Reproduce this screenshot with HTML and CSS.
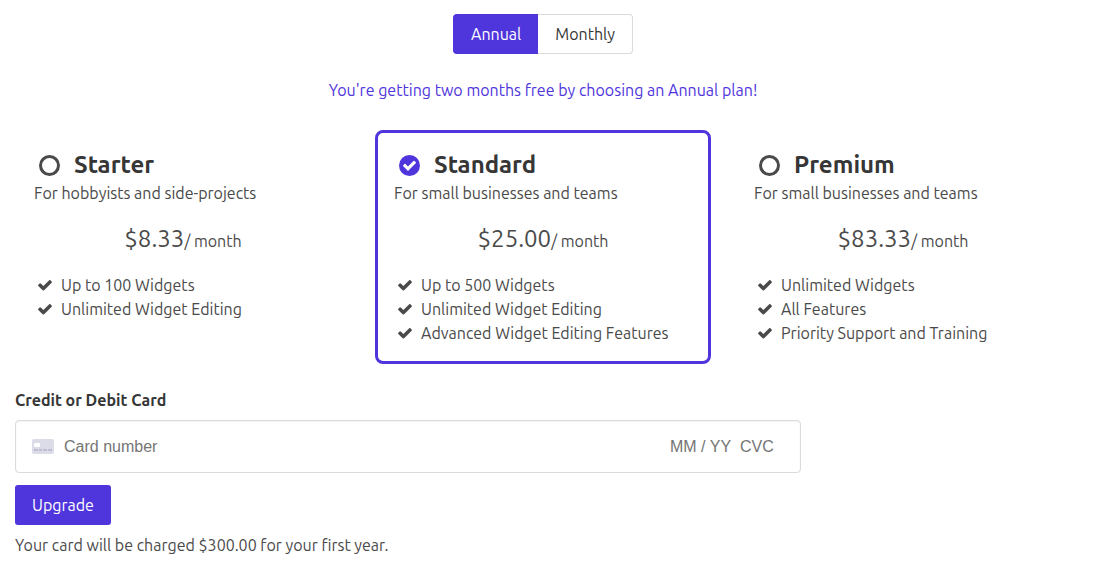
FILE: index.html
```html
<!DOCTYPE html>
<html lang="en">
<head>
    <meta charset="UTF-8">
    <meta name="viewport" content="width=device-width, initial-scale=1.0">
    <title>Upgrade</title>
    <link rel="stylesheet" href="styles.css">
</head>
<body>
    <svg width="0" height="0" class="sprite" aria-hidden="true">
        <symbol id="check" viewBox="0 0 1792 1792">
            <path d="M1671 566q0 40-28 68l-724 724-136 136q-28 28-68 28t-68-28l-136-136-362-362q-28-28-28-68t28-68l136-136q28-28 68-28t68 28l294 295 656-657q28-28 68-28t68 28l136 136q28 28 28 68z"/>
        </symbol>
    </svg>

    <main class="billing">
        <div class="toggle">
            <button type="button" class="toggle-btn selected">Annual</button>
            <button type="button" class="toggle-btn">Monthly</button>
        </div>
        <p class="promo">You're getting two months free by choosing an Annual plan!</p>

        <div class="plans">
            <label class="plan">
                <span class="plan-title">
                    <span class="radio"><input type="radio" name="plan" value="starter"><svg><use href="#check"/></svg></span>
                    Starter
                </span>
                <span class="plan-info">For hobbyists and side-projects</span>
                <span class="price"><span class="amount">$8.33</span>/ month</span>
                <ul class="features">
                    <li><svg><use href="#check"/></svg>Up to 100 Widgets</li>
                    <li><svg><use href="#check"/></svg>Unlimited Widget Editing</li>
                </ul>
            </label>
            <label class="plan">
                <span class="plan-title">
                    <span class="radio"><input type="radio" name="plan" value="standard" checked><svg><use href="#check"/></svg></span>
                    Standard
                </span>
                <span class="plan-info">For small businesses and teams</span>
                <span class="price"><span class="amount">$25.00</span>/ month</span>
                <ul class="features">
                    <li><svg><use href="#check"/></svg>Up to 500 Widgets</li>
                    <li><svg><use href="#check"/></svg>Unlimited Widget Editing</li>
                    <li><svg><use href="#check"/></svg>Advanced Widget Editing Features</li>
                </ul>
            </label>
            <label class="plan">
                <span class="plan-title">
                    <span class="radio"><input type="radio" name="plan" value="premium"><svg><use href="#check"/></svg></span>
                    Premium
                </span>
                <span class="plan-info">For small businesses and teams</span>
                <span class="price"><span class="amount">$83.33</span>/ month</span>
                <ul class="features">
                    <li><svg><use href="#check"/></svg>Unlimited Widgets</li>
                    <li><svg><use href="#check"/></svg>All Features</li>
                    <li><svg><use href="#check"/></svg>Priority Support and Training</li>
                </ul>
            </label>
        </div>

        <form class="payment">
            <label class="card-label" for="card-number">Credit or Debit Card</label>
            <div class="card-field">
                <svg class="card-icon" viewBox="0 0 22 15" aria-hidden="true">
                    <rect width="22" height="15" rx="2" fill="#dcdce8"/>
                    <rect x="2" y="4" width="6" height="4" rx="1" fill="#fff"/>
                    <path d="M2 11h4M7 11h3M11 11h4M16 11h4" stroke="#b4b3cb" stroke-width="1.4"/>
                </svg>
                <input type="text" id="card-number" class="number" placeholder="Card number">
                <input type="text" class="expiry" placeholder="MM / YY" aria-label="Expiry date">
                <input type="text" class="cvc" placeholder="CVC" aria-label="CVC">
            </div>
            <button type="button" class="upgrade">Upgrade</button>
            <p class="charge">Your card will be charged $300.00 for your first year.</p>
        </form>
    </main>

    <script>
        const toggleButtons = document.querySelectorAll('.toggle-btn');

        toggleButtons.forEach(button => {
            button.addEventListener('click', () => {
                toggleButtons.forEach(b => b.classList.remove('selected'));
                button.classList.add('selected');
            });
        });
    </script>
</body>
</html>
```
FILE: styles.css
```css
* {
    box-sizing: border-box;
}

body {
    margin: 0;
    font-family: Ubuntu, "Noto Sans", sans-serif;
    font-size: 16px;
    line-height: 24px;
    color: #4a4a4a;
    background: #fff;
}

p, ul {
    margin: 0;
    padding: 0;
}

button {
    font: inherit;
    height: 40px;
    padding: 0 17px;
    cursor: pointer;
}

.sprite {
    position: absolute;
}

.billing {
    padding: 14px 22px 20px 15px;
}

.toggle {
    display: flex;
    justify-content: center;
}

.toggle-btn {
    background: #fff;
    border: 1px solid #dbdbdb;
    color: #363636;
}

.toggle-btn:first-child {
    border-radius: 4px 0 0 4px;
    border-right: none;
}

.toggle-btn:last-child {
    border-radius: 0 4px 4px 0;
    border-left: none;
}

.toggle-btn.selected {
    background: #4f35dc;
    border-color: #4f35dc;
    color: #fff;
}

.promo {
    margin: 24px 0 28px;
    text-align: center;
    color: #4f35dc;
}

.plans {
    display: grid;
    grid-template-columns: repeat(3, 1fr);
    gap: 24px;
}

.plan {
    display: block;
    padding: 15px 16px 16px;
    border: 3px solid transparent;
    border-radius: 8px;
    cursor: pointer;
}

.plan:has(input:checked) {
    border-color: #4f35dc;
}

.plan-title {
    display: flex;
    align-items: center;
    gap: 14px;
    padding-left: 5px;
    font-size: 24px;
    font-weight: 700;
    line-height: 34px;
    color: #363636;
}

.radio {
    position: relative;
    display: flex;
}

.radio input {
    appearance: none;
    width: 21px;
    height: 21px;
    margin: 0;
    border: 3px solid #4a4a4a;
    border-radius: 50%;
}

.radio svg {
    position: absolute;
    inset: 3px;
    width: 15px;
    height: 15px;
    fill: none;
}

.radio input:checked {
    background: #4f35dc;
    border-color: #4f35dc;
}

.radio input:checked + svg {
    fill: #fff;
}

.plan-info {
    display: block;
    line-height: 23px;
}

.price {
    display: block;
    margin: 16px 0 14px;
    text-align: center;
    line-height: 36px;
}

.amount {
    font-size: 24px;
}

.features {
    list-style: none;
}

.features li {
    display: flex;
    align-items: center;
    gap: 8px;
    padding-left: 3px;
}

.features svg {
    width: 16px;
    height: 16px;
    fill: #4a4a4a;
}

.payment {
    max-width: 786px;
    margin-top: 24px;
}

.card-label {
    display: block;
    margin-bottom: 8px;
    font-weight: 700;
    color: #363636;
}

.card-field {
    display: flex;
    align-items: center;
    padding: 14px 16px;
    border: 1px solid #dbdbdb;
    border-radius: 4px;
    box-shadow: inset 0 1px 2px rgba(10, 10, 10, 0.06);
}

.card-icon {
    width: 22px;
    height: 15px;
    margin-right: 10px;
}

.card-field input {
    min-width: 0;
    height: 23px;
    padding: 0;
    border: none;
    outline: none;
    background: none;
    font: 16px "Liberation Sans", Arial, sans-serif;
}

.card-field input::placeholder {
    color: #757575;
}

.number {
    flex: 1;
}

.expiry {
    width: 70px;
}

.cvc {
    width: 44px;
}

.upgrade {
    margin: 12px 0 8px;
    border: none;
    border-radius: 3px;
    background: #4f35dc;
    color: #fff;
}

@media (max-width: 768px) {
    .plans {
        grid-template-columns: 1fr;
    }
}
```
